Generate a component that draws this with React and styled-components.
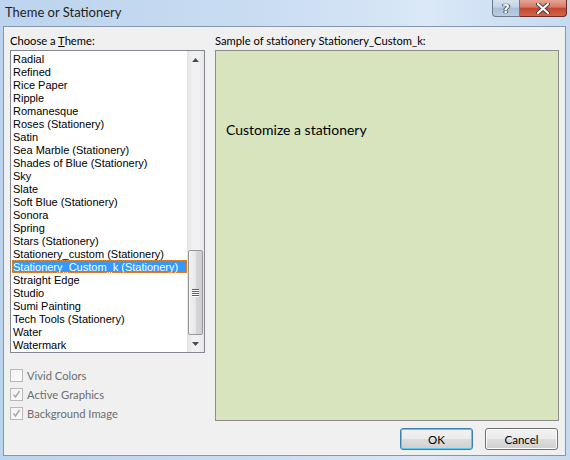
import React from "react";
import styled, { createGlobalStyle } from "styled-components";

const themes = [
  "Radial",
  "Refined",
  "Rice Paper",
  "Ripple",
  "Romanesque",
  "Roses (Stationery)",
  "Satin",
  "Sea Marble (Stationery)",
  "Shades of Blue (Stationery)",
  "Sky",
  "Slate",
  "Soft Blue (Stationery)",
  "Sonora",
  "Spring",
  "Stars (Stationery)",
  "Stationery_custom (Stationery)",
  "Stationery_Custom_k (Stationery)",
  "Straight Edge",
  "Studio",
  "Sumi Painting",
  "Tech Tools (Stationery)",
  "Water",
  "Watermark"
];

const selected = "Stationery_Custom_k (Stationery)";

const options = [
  { label: "Vivid Colors", checked: false },
  { label: "Active Graphics", checked: true },
  { label: "Background Image", checked: true }
];

const GlobalStyle = createGlobalStyle`
  html, body {
    margin: 0;
    padding: 0;
    overflow: hidden;
  }
  body {
    font-family: "Lato", "Open Sans", sans-serif;
  }
`;

const App = () => (
  <>
    <GlobalStyle />
    <Window>
      <TitleBar>
        <Title>Theme or Stationery</Title>
        <Controls>
          <HelpButton>?</HelpButton>
          <CloseButton>
            <svg width="14" height="11" viewBox="0 0 14 11">
              <path
                d="M2 1 L12 10 M12 1 L2 10"
                stroke="#3c3c3c"
                strokeWidth="4"
                strokeLinecap="round"
              />
              <path
                d="M2 1 L12 10 M12 1 L2 10"
                stroke="#fff"
                strokeWidth="2.2"
                strokeLinecap="round"
              />
            </svg>
          </CloseButton>
        </Controls>
      </TitleBar>
      <Client>
        <Columns>
          <LeftColumn>
            <Label>
              Choose a <u>T</u>heme:
            </Label>
            <ListBox>
              <Items>
                {themes.map(t => (
                  <Item key={t} selected={t === selected}>
                    {t}
                  </Item>
                ))}
              </Items>
              <ScrollBar>
                <ArrowButton>
                  <svg width="7" height="4" viewBox="0 0 7 4">
                    <path d="M3.5 0 L7 4 L0 4 Z" fill="#4d4d4d" />
                  </svg>
                </ArrowButton>
                <Track>
                  <Thumb>
                    <Grip>
                      <span />
                      <span />
                      <span />
                      <span />
                    </Grip>
                  </Thumb>
                </Track>
                <ArrowButton>
                  <svg width="7" height="4" viewBox="0 0 7 4">
                    <path d="M0 0 L7 0 L3.5 4 Z" fill="#4d4d4d" />
                  </svg>
                </ArrowButton>
              </ScrollBar>
            </ListBox>
            <Checks>
              {options.map(o => (
                <CheckRow key={o.label}>
                  <Box>
                    {o.checked && (
                      <svg width="9" height="9" viewBox="0 0 9 9">
                        <path
                          d="M1.5 4.5 L3.5 7 L7.5 1"
                          stroke="#a8a8a8"
                          strokeWidth="1.4"
                          fill="none"
                        />
                      </svg>
                    )}
                  </Box>
                  {o.label}
                </CheckRow>
              ))}
            </Checks>
          </LeftColumn>
          <RightColumn>
            <Label>Sample of stationery Stationery_Custom_k:</Label>
            <Sample>
              <SampleText>Customize a stationery</SampleText>
            </Sample>
          </RightColumn>
        </Columns>
        <ButtonRow>
          <Button primary>OK</Button>
          <Button>Cancel</Button>
        </ButtonRow>
      </Client>
    </Window>
  </>
);

const Window = styled.div`
  width: 570px;
  height: 460px;
  box-sizing: border-box;
  padding: 0 4px 4px 3px;
  display: flex;
  flex-direction: column;
  background: linear-gradient(90deg, #bcd4ee 0%, #c9dcf2 45%, #dae8f7 75%, #c6daf1 100%);
`;

const TitleBar = styled.div`
  height: 26px;
  display: flex;
  align-items: flex-start;
  flex-shrink: 0;
`;

const Title = styled.div`
  flex: 1;
  padding: 4px 0 0 2px;
  font-size: 13px;
  line-height: 16px;
  color: #1e1e1e;
`;

const Controls = styled.div`
  display: flex;
  height: 17px;
  margin-right: -1px;
`;

const HelpButton = styled.div`
  width: 28px;
  height: 17px;
  box-sizing: border-box;
  border: 1px solid #6a7a8f;
  border-top: none;
  border-radius: 0 0 0 4px;
  background: linear-gradient(#d4e1ef 0%, #c2d3e6 45%, #a9bfd8 50%, #b9cde3 100%);
  display: flex;
  justify-content: center;
  align-items: center;
  font-family: "DejaVu Sans", sans-serif;
  font-weight: bold;
  font-size: 13px;
  color: #fff;
  text-shadow: 0 0 1px #333, 0 0 1px #333, 1px 0 0 #555, -1px 0 0 #555;
`;

const CloseButton = styled.div`
  width: 47px;
  height: 17px;
  box-sizing: border-box;
  border: 1px solid #6e2a22;
  border-left: none;
  border-top: none;
  border-radius: 0 0 4px 0;
  background: linear-gradient(#e6a595 0%, #d67b68 45%, #c7452f 50%, #d3644c 100%);
  display: flex;
  justify-content: center;
  align-items: center;
`;

const Client = styled.div`
  flex: 1;
  background: #f0f0f0;
  border: 1px solid #8597ab;
  padding: 6px 6px 0 6px;
  display: flex;
  flex-direction: column;
`;

const Columns = styled.div`
  display: grid;
  grid-template-columns: 195px 344px;
  column-gap: 10px;
`;

const LeftColumn = styled.div`
  display: flex;
  flex-direction: column;
`;

const RightColumn = styled.div`
  display: flex;
  flex-direction: column;
`;

const Label = styled.div`
  height: 17px;
  font-size: 11.2px;
  line-height: 15px;
  color: #000;
  white-space: nowrap;

  u {
    text-underline-offset: 1px;
  }
`;

const ListBox = styled.div`
  height: 303px;
  box-sizing: border-box;
  border: 1px solid #828790;
  background: #fff;
  display: flex;
`;

const Items = styled.div`
  flex: 1;
  padding: 1px 0 0 1px;
  overflow: hidden;
`;

const Item = styled.div`
  height: 13px;
  line-height: 14px;
  padding-left: 1px;
  font-family: "Liberation Sans", Arial, sans-serif;
  font-size: 11px;
  white-space: nowrap;
  color: ${({ selected }) => (selected ? "#fff" : "#000")};
  background: ${({ selected }) => (selected ? "#3399ff" : "transparent")};
  outline: ${({ selected }) => (selected ? "1px dotted #e8882c" : "none")};
  outline-offset: -1px;
`;

const ScrollBar = styled.div`
  width: 17px;
  display: flex;
  flex-direction: column;
  background: linear-gradient(90deg, #e3e3e3, #f1f1f1 30%, #f1f1f1 70%, #e6e6e6);
`;

const ArrowButton = styled.div`
  height: 17px;
  display: flex;
  justify-content: center;
  align-items: center;
`;

const Track = styled.div`
  flex: 1;
  display: flex;
  flex-direction: column;
  justify-content: flex-end;
`;

const Thumb = styled.div`
  height: 85px;
  margin: 0 1px;
  box-sizing: border-box;
  border: 1px solid #979797;
  border-radius: 2px;
  background: linear-gradient(90deg, #f2f2f2, #e6e6e6 50%, #d6d6d6 51%, #cfcfcf);
  display: flex;
  justify-content: center;
  align-items: center;
`;

const Grip = styled.div`
  display: flex;
  flex-direction: column;
  gap: 1px;

  span {
    display: block;
    width: 7px;
    height: 1px;
    background: #5c5c5c;
    box-shadow: 0 1px 0 #fff;
  }
`;

const Checks = styled.div`
  margin-top: 13px;
  display: flex;
  flex-direction: column;
`;

const CheckRow = styled.div`
  height: 19px;
  display: flex;
  align-items: center;
  gap: 4px;
  font-size: 11.2px;
  color: #6d6d6d;
`;

const Box = styled.div`
  width: 13px;
  height: 13px;
  box-sizing: border-box;
  border: 1px solid #b8b8b8;
  background: linear-gradient(135deg, #f3f3f3, #fafafa);
  display: flex;
  justify-content: center;
  align-items: center;
`;

const Sample = styled.div`
  height: 371px;
  box-sizing: border-box;
  border: 1px solid #8c8c8c;
  background: #d7e4bd;
  padding: 70px 0 0 10px;
`;

const SampleText = styled.div`
  font-family: "Lato", "Open Sans", sans-serif;
  font-size: 14px;
  line-height: 18px;
  color: #000;
`;

const ButtonRow = styled.div`
  display: flex;
  justify-content: flex-end;
  gap: 12px;
  margin-top: 5px;
  padding-right: 1px;
`;

const Button = styled.div`
  width: 73px;
  height: 22px;
  box-sizing: border-box;
  border: 1px solid ${({ primary }) => (primary ? "#3c7fb1" : "#707070")};
  border-radius: 3px;
  background: linear-gradient(#f2f2f2 0%, #ebebeb 50%, #dddddd 51%, #cfcfcf 100%);
  box-shadow: ${({ primary }) =>
    primary ? "inset 0 0 0 1px #5fc6f2" : "inset 0 0 0 1px #fcfcfc"};
  display: flex;
  justify-content: center;
  align-items: center;
  font-size: 11.5px;
  color: #000;
`;

export default App;
